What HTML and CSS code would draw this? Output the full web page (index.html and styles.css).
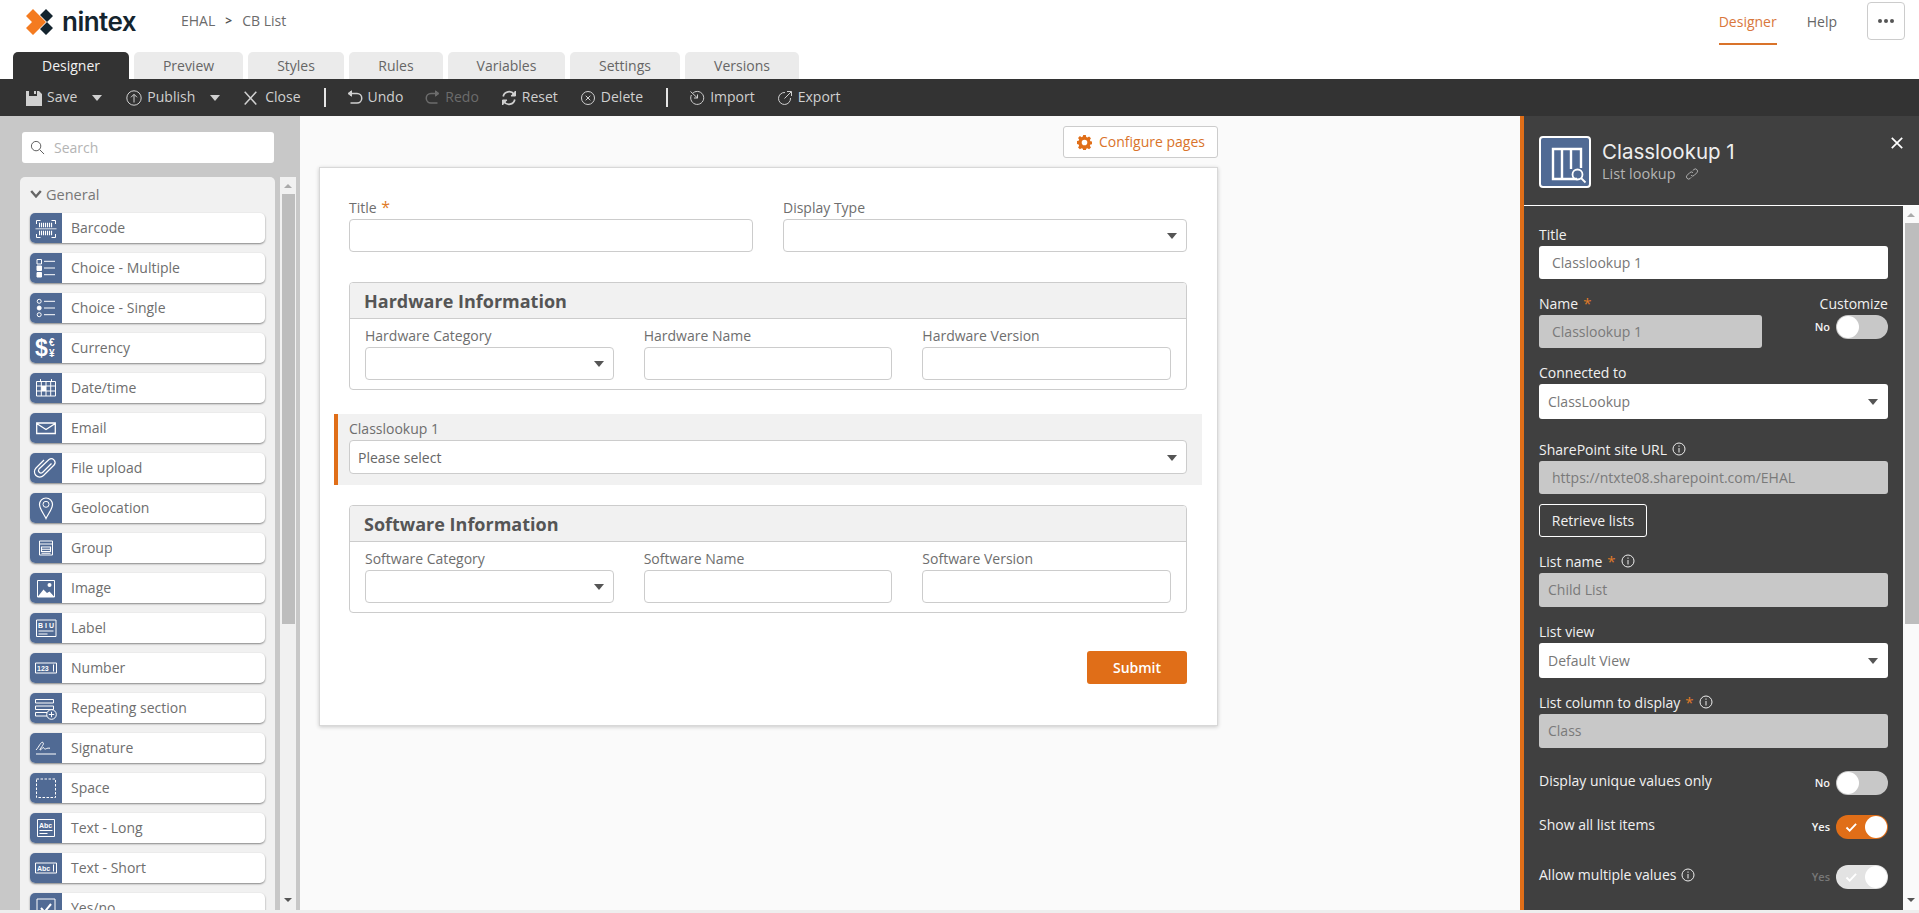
FILE: index.html
```html
<!DOCTYPE html>
<html lang="en">
<head>
<meta charset="utf-8">
<title>CB List - Nintex Designer</title>
<link rel="stylesheet" href="styles.css">
</head>
<body>
<div class="app">
  <header class="topbar">
    <div class="brand">
      <svg class="logo" viewBox="0 0 27 26" width="27" height="26"><path fill="#f47b20" d="M0 7 7 0l13 13L7 26l-7-7 6-6z"/><path fill="#14242e" d="M14 6l6-6 7 7-6 6zM21 13l6 6-7 7-6-6z"/></svg>
      <span class="wordmark">nintex</span>
    </div>
    <nav class="crumbs"><span>EHAL</span><span class="crumb-sep">&gt;</span><span>CB List</span></nav>
    <div class="topnav">
      <a class="topnav-link is-active">Designer</a>
      <a class="topnav-link">Help</a>
      <button class="more"><i></i><i></i><i></i></button>
    </div>
  </header>

  <div class="tabs">
    <div class="tab is-active w-designer">Designer</div>
    <div class="tab w-preview">Preview</div>
    <div class="tab w-styles">Styles</div>
    <div class="tab w-rules">Rules</div>
    <div class="tab w-variables">Variables</div>
    <div class="tab w-settings">Settings</div>
    <div class="tab w-versions">Versions</div>
  </div>

  <div class="toolbar">
    <span class="tool first"><svg viewBox="0 0 16 16"><path fill="#d0d0d0" stroke="none" d="M0 1h3v5h8V1h1v0h1l3 3v12H0z"/><path fill="#d0d0d0" stroke="none" d="M8 1h2v3H8z"/></svg>Save</span>
    <span class="caret"></span>
    <span class="tool"><svg viewBox="0 0 16 16"><circle cx="8" cy="8" r="7.2"/><path d="M8 12.500V4.500M5 7.300 8 4.300l3 3"/></svg>Publish</span>
    <span class="caret"></span>
    <span class="tool gap-8"><svg class="narrow" viewBox="0 0 13 16"><path stroke-width="1.500" d="M.7 1.800l11.600 12.600M12.300 1.800.7 14.400"/></svg>Close</span>
    <span class="tb-sep"></span>
    <span class="tool tight"><svg viewBox="0 0 16 16"><path stroke-width="1.500" d="M2 3.500h8a4.600 4.600 0 0 1 0 9.500H3.500"/><path fill="#d0d0d0" d="M4.500 .8 1 3.500l3.500 2.700z"/></svg>Undo</span>
    <span class="tool tighter is-off"><svg viewBox="0 0 16 16"><path stroke-width="1.500" d="M13 3.500H7a4.600 4.600 0 0 0 0 9.500h6.500"/><path fill="#6c6c6c" d="M11.500 .8 15 3.500l-3.500 2.700z"/></svg>Redo</span>
    <span class="tool tight"><svg viewBox="0 0 16 16"><path stroke-width="1.700" d="M2.200 6.500A6 6 0 0 1 13 4.300M13.800 9.500A6 6 0 0 1 3 11.700"/><path fill="#d0d0d0" d="M14.500 1v5h-4.500zM1.500 15v-5H6z"/></svg>Reset</span>
    <span class="tool tight"><svg viewBox="0 0 16 16"><circle cx="8" cy="8" r="6.500"/><path d="M5.700 5.700l4.600 4.600M10.300 5.700l-4.600 4.600"/></svg>Delete</span>
    <span class="tb-sep"></span>
    <span class="tool tight"><svg viewBox="0 0 16 16"><path d="M4.200 2.800A6.500 6.500 0 1 1 2.400 5"/><path d="M1.500 1.500 8.500 8M8.500 4.500V8H5"/></svg>Import</span>
    <span class="tool tight"><svg viewBox="0 0 16 16"><path d="M8 2.500A6 6 0 1 0 13.500 8"/><path d="M7.500 8.500 14 2M10 1.500h4.500V6"/></svg>Export</span>
  </div>

  <main class="workspace">
    <aside class="palette">
      <div class="search"><svg viewBox="0 0 16 16" width="15" height="15"><circle cx="6.500" cy="6.500" r="5"/><path d="M10.300 10.300 15 15"/></svg><span>Search</span></div>
      <div class="palette-body">
        <div class="library">
          <div class="library-head"><svg viewBox="0 0 12 10" width="12" height="10"><path d="M1.200 2 6 7.500 10.800 2"/></svg>General</div>
          <div class="item"><span class="ico"><svg viewBox="0 0 32 30"><path d="M6.500 11V7.500h4M21.500 7.500h4V11M6.500 21v3.500h4M21.500 24.500h4V21"/><path stroke-width=".8" d="M5.500 15.800h21"/><path stroke-dasharray="1.100 .9" stroke-width="4.500" d="M9 12h14M9 20h14"/></svg></span><span class="item-text">Barcode</span></div>
          <div class="item"><span class="ico"><svg viewBox="0 0 32 30"><path d="M7 6.500h4.500V11H7z"/><path fill="#fff" d="M7 13h4.500v4.500H7zM7 19.500h4.500V24H7z"/><path d="M14 8.300h11M14 15h11M14 21.700h11"/></svg></span><span class="item-text">Choice - Multiple</span></div>
          <div class="item"><span class="ico"><svg viewBox="0 0 32 30"><circle cx="9.200" cy="8.300" r="2"/><circle cx="9.200" cy="15" r="2" fill="#fff"/><circle cx="9.200" cy="21.700" r="2"/><path d="M14 8.300h11M14 15h11M14 21.700h11"/></svg></span><span class="item-text">Choice - Single</span></div>
          <div class="item"><span class="ico"><svg viewBox="0 0 32 30"><text x="5" y="22.500" class="ico-big">$</text><text x="19" y="12.500" class="ico-sm">€</text><text x="19" y="24" class="ico-sm">¥</text></svg></span><span class="item-text">Currency</span></div>
          <div class="item"><span class="ico"><svg viewBox="0 0 32 30"><path d="M6.500 8.500h19v14.500h-19zM6.500 13h19M6.500 18h19M11.300 8.500V23M16 8.500V23M20.700 8.500V23M10.500 6v2.500M21.500 6v2.500"/><path fill="#fff" stroke="none" d="M11.300 13H16v5h-4.700z"/></svg></span><span class="item-text">Date/time</span></div>
          <div class="item"><span class="ico"><svg viewBox="0 0 32 30"><path stroke-width="1.300" d="M6.700 10h18.600v10.500H6.700zM6.700 10.500 16 16.500l9.300-6"/></svg></span><span class="item-text">Email</span></div>
          <div class="item"><span class="ico"><svg viewBox="0 0 32 30"><path stroke-width="1.200" d="M21.500 10.500 12.500 19.500a2.500 2.500 0 0 1-3.500-3.500L19 6.500a3.800 3.800 0 0 1 5.300 5.300L13.500 22.500a5.300 5.300 0 0 1-7.500-7.500L14 7"/></svg></span><span class="item-text">File upload</span></div>
          <div class="item"><span class="ico"><svg viewBox="0 0 32 30"><path stroke-width="1.200" d="M16 25.500C14 21 9.500 16 9.500 11.500a6.500 6.500 0 0 1 13 0C22.500 16 18 21 16 25.500z"/><circle cx="16" cy="11.300" r="3"/></svg></span><span class="item-text">Geolocation</span></div>
          <div class="item"><span class="ico"><svg viewBox="0 0 32 30"><path d="M9.500 8h13v14h-13zM9.500 11h13"/><path stroke-width="1.100" d="M11.500 14h9v4.500h-9zM11.500 16.200h9M11.500 20.200h9"/></svg></span><span class="item-text">Group</span></div>
          <div class="item"><span class="ico"><svg viewBox="0 0 32 30"><path d="M7.500 7.500h17v16.500h-17z"/><circle cx="19.500" cy="12" r="2" fill="#fff" stroke="none"/><path fill="#fff" stroke="none" d="M7.500 24l6-7.500 3.500 3.500 2.500-1.500 5 5.500z"/></svg></span><span class="item-text">Image</span></div>
          <div class="item"><span class="ico"><svg viewBox="0 0 32 30"><path d="M6.500 7h19.500v16.500H6.500z"/><text x="8" y="15" class="ico-xs">B I U</text><path d="M8.500 18h15M8.500 21h9"/></svg></span><span class="item-text">Label</span></div>
          <div class="item"><span class="ico"><svg viewBox="0 0 32 30"><path d="M5.500 10h21v10h-21z"/><text x="7" y="18.200" class="ico-xs">123</text><path d="M23.500 11.500v7"/></svg></span><span class="item-text">Number</span></div>
          <div class="item"><span class="ico"><svg viewBox="0 0 32 30"><path d="M5.500 6.500h18v3.500h-18zM5.500 13h18v3.500h-18zM5.500 19.500h12v3.500h-12z"/><circle cx="21.500" cy="21.500" r="4.800" fill="#506a94"/><path d="M21.500 18.800v5.400M18.800 21.500h5.400"/></svg></span><span class="item-text">Repeating section</span></div>
          <div class="item"><span class="ico"><svg viewBox="0 0 32 30"><path d="M6 17c3-3 5-9 7-7.500s-4 7-3 7.500 2.500-3 3.500-2.500 .5 2 2 1.500 1.500-1 4.500-.8M6 21h20"/></svg></span><span class="item-text">Signature</span></div>
          <div class="item"><span class="ico"><svg viewBox="0 0 32 30"><path stroke-dasharray="2.500 1.500" d="M6.500 6h19v18.500h-19z"/></svg></span><span class="item-text">Space</span></div>
          <div class="item"><span class="ico"><svg viewBox="0 0 32 30"><path d="M7.500 6.500h17v17h-17z"/><text x="9" y="15" class="ico-xs">Abc</text><path d="M9.500 17.500h13M9.500 20.500h8"/></svg></span><span class="item-text">Text - Long</span></div>
          <div class="item"><span class="ico"><svg viewBox="0 0 32 30"><path d="M5.500 10h21v10h-21z"/><text x="7" y="18.200" class="ico-xs">Abc</text><path d="M23.500 11.500v7"/></svg></span><span class="item-text">Text - Short</span></div>
          <div class="item"><span class="ico"><svg viewBox="0 0 32 30"><path d="M7 6h18v18H7z"/><path stroke-width="2" d="M11 15l3.500 4 6.500-8"/></svg></span><span class="item-text">Yes/no</span></div>
        </div>
        <div class="vscroll"><span class="arrow-up"></span><span class="thumb thumb-left"></span><span class="grow"></span><span class="arrow-down"></span></div>
      </div>
    </aside>

    <section class="canvas">
      <div class="canvas-inner">
        <button class="configure"><svg viewBox="0 0 16 16" width="15" height="15"><path fill="#e06e18" stroke="none" fill-rule="evenodd" d="M6.600 0h2.800l.4 2.100 1.300.6 1.800-1.200 2 2-1.200 1.800.6 1.300 2.100.4v2.800l-2.100.4-.6 1.300 1.200 1.800-2 2-1.800-1.200-1.300.6-.4 2.100H6.600l-.4-2.100-1.300-.6-1.800 1.200-2-2 1.200-1.800-.6-1.300L-.4 9.400V6.600l2.100-.4.6-1.300L1.100 3.100l2-2 1.800 1.200 1.300-.6zM8 5a3 3 0 1 0 0 6 3 3 0 0 0 0-6z"/></svg><span>Configure pages</span></button>
        <div class="form-card">
          <div class="row-2">
            <div><div class="flabel">Title <em>*</em></div><div class="box"></div></div>
            <div><div class="flabel">Display Type</div><div class="box is-select"><span></span><b class="dd"></b></div></div>
          </div>
          <div class="section">
            <div class="section-head">Hardware Information</div>
            <div class="section-body">
              <div><div class="flabel tall">Hardware Category</div><div class="box is-select"><span></span><b class="dd"></b></div></div>
              <div><div class="flabel tall">Hardware Name</div><div class="box"></div></div>
              <div><div class="flabel tall">Hardware Version</div><div class="box"></div></div>
            </div>
          </div>
          <div class="selected-row">
            <div class="flabel">Classlookup 1</div>
            <div class="box is-select big"><span>Please select</span><b class="dd"></b></div>
          </div>
          <div class="section second">
            <div class="section-head">Software Information</div>
            <div class="section-body">
              <div><div class="flabel tall">Software Category</div><div class="box is-select"><span></span><b class="dd"></b></div></div>
              <div><div class="flabel tall">Software Name</div><div class="box"></div></div>
              <div><div class="flabel tall">Software Version</div><div class="box"></div></div>
            </div>
          </div>
          <div class="submit-row"><button class="submit">Submit</button></div>
        </div>
      </div>
    </section>

    <aside class="props">
      <div class="props-head">
        <div class="props-icon"><svg viewBox="0 0 48 48" width="48" height="48"><path stroke-width="2.400" d="M40 30V11H12v30h24M21 11v30M30 11v20"/><path stroke="#506a94" stroke-width="5" d="M36 41h8"/><circle cx="36.500" cy="36.500" r="5" stroke-width="1.800"/><path stroke-width="1.800" d="M40 40l4.500 4.500"/></svg></div>
        <div class="props-title">
          <div class="props-name">Classlookup 1</div>
          <div class="props-sub">List lookup <svg viewBox="0 0 16 16" width="14" height="14"><path stroke-width="1.100" d="M7 9.500a2.500 2.500 0 0 0 3.600 0l3-3A2.500 2.500 0 0 0 10 3L8.800 4.200M9 6.500a2.500 2.500 0 0 0-3.600 0l-3 3A2.500 2.500 0 0 0 6 13l1.200-1.200"/></svg></div>
        </div>
        <svg class="props-close" viewBox="0 0 12 12" width="12" height="12"><path stroke-width="1.700" d="M.8.8l10.400 10.400M11.200.8.8 11.200"/></svg>
      </div>
      <div class="props-body">
        <div class="props-form">
          <div class="plabel">Title</div>
          <div class="pinput">Classlookup 1</div>

          <div class="name-row">
            <div class="name-col">
              <div class="plabel">Name <em>*</em></div>
              <div class="pinput is-disabled">Classlookup 1</div>
            </div>
            <div class="custom-col">
              <div class="plabel">Customize</div>
              <div class="toggle-wrap"><span class="tstate">No</span><span class="toggle"><i></i></span></div>
            </div>
          </div>

          <div class="plabel mt-14">Connected to</div>
          <div class="pinput is-select sel"><span>ClassLookup</span><b class="dd"></b></div>

          <div class="plabel mt-20">SharePoint site URL <svg class="info" viewBox="0 0 14 14"><circle cx="7" cy="7" r="6"/><path d="M7 6v4.500M7 3.500v1.300"/></svg></div>
          <div class="pinput is-disabled">https://ntxte08.sharepoint.com/EHAL</div>
          <button class="retrieve">Retrieve lists</button>

          <div class="plabel mt-14">List name <em>*</em> <svg class="info" viewBox="0 0 14 14"><circle cx="7" cy="7" r="6"/><path d="M7 6v4.500M7 3.500v1.300"/></svg></div>
          <div class="pinput is-disabled is-tight h34">Child List</div>

          <div class="plabel mt-14">List view</div>
          <div class="pinput is-select sel"><span>Default View</span><b class="dd"></b></div>

          <div class="plabel mt-14">List column to display <em>*</em> <svg class="info" viewBox="0 0 14 14"><circle cx="7" cy="7" r="6"/><path d="M7 6v4.500M7 3.500v1.300"/></svg></div>
          <div class="pinput is-disabled is-tight h34">Class</div>

          <div class="switch-row r1"><span class="plabel">Display unique values only</span><div class="toggle-wrap"><span class="tstate">No</span><span class="toggle"><i></i></span></div></div>
          <div class="switch-row r2"><span class="plabel">Show all list items</span><div class="toggle-wrap"><span class="tstate">Yes</span><span class="toggle is-on"><svg viewBox="0 0 14 12" width="13" height="11"><path stroke-width="2" d="M1.500 6l3.500 3.500L12 2"/></svg><i></i></span></div></div>
          <div class="switch-row r3"><span class="plabel">Allow multiple values <svg class="info" viewBox="0 0 14 14"><circle cx="7" cy="7" r="6"/><path d="M7 6v4.500M7 3.500v1.300"/></svg></span><div class="toggle-wrap"><span class="tstate is-off">Yes</span><span class="toggle is-on is-off"><svg viewBox="0 0 14 12" width="13" height="11"><path stroke-width="2" d="M1.500 6l3.500 3.500L12 2"/></svg><i></i></span></div></div>
        </div>
        <div class="vscroll right"><span class="arrow-up"></span><span class="thumb thumb-right"></span><span class="grow"></span><span class="arrow-down"></span></div>
      </div>
    </aside>
  </main>
  <div class="footer-strip"></div>
</div>
</body>
</html>
```

FILE: styles.css
```css
* { box-sizing: border-box; }
html, body { margin: 0; height: 100%; overflow: hidden; }
body { font-family: "Open Sans", "Liberation Sans", sans-serif; font-size: 14px; color: #666; background: #fff; }
button { font-family: inherit; }
svg { fill: none; stroke: currentColor; display: block; flex: none; }
.app { width: 1919px; height: 913px; display: flex; flex-direction: column; }

/* top */
.topbar { height: 52px; display: flex; align-items: center; padding-left: 26px; padding-right: 14px; }
.brand { display: flex; align-items: center; width: 155px; }
.logo { stroke: none; margin-top: -8px; }
.wordmark { font-family: Inter, sans-serif; font-weight: 600; font-size: 26px; color: #14242e; margin-left: 9px; margin-top: -10px; letter-spacing: -.5px; }
.crumbs { display: flex; align-items: center; color: #6b6b6b; margin-top: -12px; }
.crumb-sep { margin: 0 10px; font-weight: 700; font-size: 12px; color: #555; }
.topnav { margin-left: auto; display: flex; align-items: center; margin-top: -10px; }
.topnav-link { color: #666; margin-right: 30px; padding-top: 10px; height: 42px; line-height: 22px; margin-top: 2px; }
.topnav-link.is-active { color: #d9773c; border-bottom: 2px solid #d9732a; height: 44px; margin-top: 4px; }
.more { width: 38px; height: 38px; border: 1px solid #ccc; border-radius: 4px; background: #fff; display: flex; align-items: center; justify-content: center; gap: 2px; padding: 0; }
.more i { width: 4px; height: 4px; border-radius: 50%; background: #555; }

.tabs { height: 27px; display: flex; gap: 5px; padding-left: 13px; }
.tab { background: #ebebeb; border-radius: 5px 5px 0 0; text-align: center; line-height: 27px; color: #666; font-size: 14px; }
.tab.is-active { background: #333; color: #f2f2f2; }
.w-designer { width: 116px; } .w-preview { width: 109px; } .w-styles { width: 96px; } .w-rules { width: 94px; }
.w-variables { width: 117px; } .w-settings { width: 110px; } .w-versions { width: 114px; }

.toolbar { height: 37px; background: #333; color: #d0d0d0; display: flex; align-items: center; padding: 0 0 2px 26px; font-size: 14px; }
.tool { display: flex; align-items: center; gap: 5px; margin-left: 24px; }
.tool.tight { margin-left: 22px; }
.tool.tighter { margin-left: 21px; }
.tool svg { width: 16px; height: 16px; margin-top: 2px; }
.tool svg.narrow { width: 13px; }
.tool.first { margin-left: 0; }
.tool.gap-8 { gap: 8px; }
.tool.is-off { color: #6c6c6c; }
.caret { width: 0; height: 0; border: 5px solid transparent; border-top: 6px solid #d0d0d0; border-bottom: 0; margin: 2px 0 0 15px; }
.tb-sep { width: 2px; height: 19px; background: #e6e6e6; margin: 2px -1px 0 23px; }

/* layout */
.workspace { height: 794px; display: flex; overflow: hidden; }
.footer-strip { height: 3px; background: #eee; }

/* palette */
.palette { width: 300px; background: #c8c8c8; display: flex; flex-direction: column; }
.search { height: 31px; margin: 16px 26px 14px 22px; background: #fff; border-radius: 3px; display: flex; align-items: center; padding-left: 8px; gap: 9px; color: #b4b4b4; }
.search svg { color: #555; }
.palette-body { flex: 1; min-height: 0; display: flex; padding-left: 20px; }
.library { width: 255px; background: #f1f1f1; border-radius: 5px 5px 0 0; padding: 0 10px; overflow: hidden; }
.library-head { height: 36px; display: flex; align-items: center; gap: 4px; color: #777; padding-bottom: 2px; font-size: 14.500px; }
.library-head svg { color: #666; stroke-width: 2.4; }
.item { height: 30px; margin-bottom: 10px; background: #fff; border-radius: 5px; box-shadow: 0 1px 2px rgba(0,0,0,.45); display: flex; align-items: center; gap: 9px; color: #6e6e6e; overflow: hidden; }
.item-text { margin-top: -2px; }
.ico { width: 32px; height: 30px; background: #506a94; flex: none; color: #fff; }
.ico svg { width: 32px; height: 30px; stroke-width: 1; }
.ico text { fill: #fff; stroke: none; font-family: "Liberation Sans", sans-serif; }
.ico-big { font-size: 23px; font-weight: 700; }
.ico-sm { font-size: 10px; font-weight: 700; }
.ico-xs { font-size: 7px; font-weight: 700; }

.vscroll { width: 16px; margin-left: 5px; background: #f1f1f1; display: flex; flex-direction: column; align-items: center; }
.vscroll .grow { flex: 1; }
.thumb { width: 13px; background: #bdbdbd; flex: none; margin-top: 2px; }
.thumb-left { height: 430px; }
.arrow-up, .arrow-down { width: 0; height: 0; border: 4px solid transparent; flex: none; margin: 5px 0 4px; }
.arrow-up { border-bottom: 4px solid #aaa; border-top: 0; margin-top: 7px; }
.arrow-down { border-top: 4px solid #555; border-bottom: 0; margin-bottom: 8px; }

/* canvas */
.canvas { width: 1220px; background: #fafafa; }
.canvas-inner { width: 899px; margin-left: 19px; padding-top: 10px; }
.configure { display: flex; align-items: center; gap: 7px; margin-left: auto; height: 32px; width: 155px; padding: 0 12px 0 13px; background: #fff; border: 1px solid #ccc; border-radius: 3px; color: #d9732a; font-size: 14px; }
.configure span { margin-top: -2px; }
.form-card { margin-top: 9px; height: 559px; background: #fff; border: 1px solid #d8d8d8; box-shadow: 0 1px 4px rgba(0,0,0,.2); padding: 29px 30px 0 29px; }
.row-2 { display: grid; grid-template-columns: 404px 404px; column-gap: 30px; }
.flabel { height: 22px; line-height: 22px; color: #6e6e6e; }
.flabel em, .plabel em { font-style: normal; color: #e07b28; }
.flabel em { font-size: 16px; margin-left: 1px; line-height: 20px; }
.flabel.tall { height: 28px; line-height: 33px; }
.box { height: 33px; background: #fff; border: 1px solid #ccc; border-radius: 4px; }
.box.big { height: 34px; }
.is-select { display: flex; align-items: center; justify-content: space-between; }
.box.is-select { padding: 0 8px; color: #666; }
.dd { width: 0; height: 0; border: 5px solid transparent; border-top: 6px solid #555; border-bottom: 0; margin-right: 1px; margin-top: 1px; }
.section { height: 108px; margin-top: 30px; border: 1px solid #ccc; border-radius: 4px; }
.section.second { margin-top: 20px; }
.section-head { height: 36px; background: #f1f1f1; border-bottom: 1px solid #ccc; border-radius: 3px 3px 0 0; font-size: 18px; font-weight: 700; color: #555; line-height: 37px; padding-left: 14px; }
.section-body { display: grid; grid-template-columns: repeat(3, 1fr); column-gap: 30px; padding: 0 15px; }
.selected-row { height: 71px; margin: 24px -15px 0; padding: 4px 15px 0 11px; background: #f1f1f1; border-left: 4px solid #e06e18; }
.submit-row { display: flex; justify-content: flex-end; margin-top: 38px; }
.submit { width: 100px; height: 33px; background: #e06e18; color: #fff; border: 0; border-radius: 3px; font-size: 14px; font-weight: 600; }

/* properties */
.props { width: 399px; background: #404040; border-left: 4px solid #e06e18; display: flex; flex-direction: column; color: #f1f1f1; }
.props-head { height: 90px; border-bottom: 1px solid #fff; display: flex; padding: 20px 0 0 15px; position: relative; flex: none; }
.props-icon { width: 52px; height: 52px; background: #506a94; border: 2px solid #fff; border-radius: 4px; color: #fff; flex: none; }
.props-title { margin-left: 11px; }
.props-name { font-family: Inter, sans-serif; font-size: 20.500px; line-height: 28px; margin-top: 2px; color: #eee; }
.props-sub { display: flex; align-items: center; gap: 9px; color: #b5b5b5; font-size: 14.500px; line-height: 20px; margin-top: -2px; }
.props-close { position: absolute; right: 16px; top: 21px; color: #fff; }
.props-body { flex: 1; min-height: 0; display: flex; }
.props-form { width: 379px; padding: 18px 15px 0; }
.vscroll.right { margin-left: 0; background: #fafafa; align-items: flex-end; width: 16px; }
.vscroll.right .arrow-up, .vscroll.right .arrow-down { margin-right: 4px; }
.thumb-right { width: 14px; height: 401px; }
.plabel { display: flex; align-items: center; gap: 5px; height: 22px; padding-bottom: 2px; color: #f1f1f1; white-space: nowrap; }
.plabel em { font-size: 15px; }
.info { width: 14px; height: 14px; color: #eee; }
.pinput { height: 33px; background: #fff; border-radius: 3px; color: #777; line-height: 33px; padding-left: 13px; }
.pinput.sel { height: 35px; padding: 0 9px 0 9px; }
.pinput.is-disabled { background: #c8c8c8; color: #7a7a7a; }
.pinput.is-tight { padding-left: 9px; }
.pinput.h34 { height: 34px; line-height: 34px; }
.mt-14 { margin-top: 14px; }
.mt-20 { margin-top: 20px; }
.name-row { display: flex; justify-content: space-between; margin-top: 14px; }
.name-col { width: 223px; }
.custom-col { display: flex; flex-direction: column; align-items: flex-end; }
.toggle-wrap { display: flex; align-items: center; gap: 6px; }
.tstate { font-size: 11px; font-weight: 600; color: #f4f4f4; margin-top: -2px; }
.tstate.is-off { color: #777; }
.toggle { width: 52px; height: 24px; border-radius: 12px; background: #c8c8c8; display: flex; align-items: center; padding: 0 1px; color: #fff; }
.toggle i { width: 22px; height: 22px; border-radius: 50%; background: #fff; }
.toggle.is-on { background: #e06e18; justify-content: space-between; padding-left: 9px; }
.toggle.is-on.is-off { background: #e3e3e3; }
.retrieve { display: block; width: 108px; height: 33px; margin-top: 10px; padding: 0; background: transparent; border: 1px solid #fff; border-radius: 3px; color: #f1f1f1; font-size: 14px; font-weight: 500; }
.switch-row { display: flex; justify-content: space-between; align-items: center; height: 24px; }
.switch-row .plabel { margin-top: -3px; }
.r1 { margin-top: 23px; }
.r2 { margin-top: 20px; }
.r3 { margin-top: 26px; }
```
